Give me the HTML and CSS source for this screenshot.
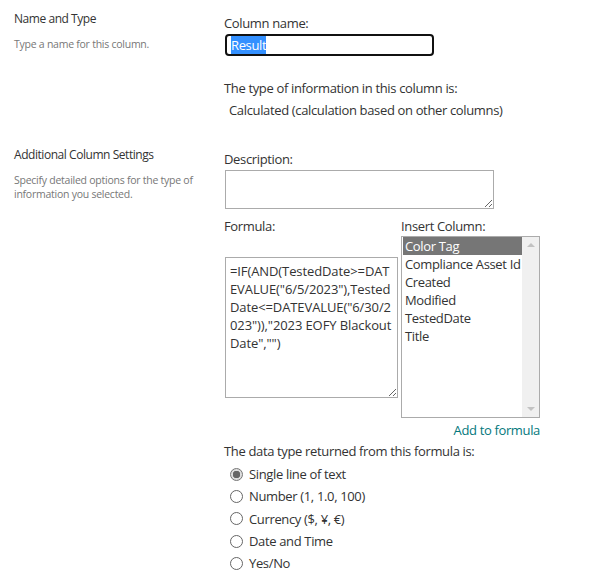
FILE: index.html
```html
<!DOCTYPE html>
<html lang="en">
<head>
    <meta charset="UTF-8">
    <title>Column Settings</title>
    <link rel="stylesheet" href="styles.css">
</head>
<body>
    <div class="section first">
        <div class="side">
            <h3>Name and Type</h3>
            <p>Type a name for this column.</p>
        </div>
        <div class="main">
            <label>Column name:</label>
            <div class="name-box"><span class="selected">Result</span></div>
            <div class="type-label">The type of information in this column is:</div>
            <div class="type-value">Calculated (calculation based on other columns)</div>
        </div>
    </div>

    <div class="section">
        <div class="side">
            <h3>Additional Column Settings</h3>
            <p>Specify detailed options for the type of information you selected.</p>
        </div>
        <div class="main">
            <label>Description:</label>
            <textarea class="desc-box"></textarea>

            <div class="formula-row">
                <div class="formula-col">
                    <label>Formula:</label>
                    <textarea class="formula-box">=IF(AND(TestedDate&gt;=DATEVALUE("6/5/2023"),TestedDate&lt;=DATEVALUE("6/30/2023")),"2023 EOFY Blackout Date","")</textarea>
                </div>
                <div class="insert-col">
                    <label>Insert Column:</label>
                    <div class="listbox">
                        <ul class="options">
                            <li class="active">Color Tag</li>
                            <li>Compliance Asset Id</li>
                            <li>Created</li>
                            <li>Modified</li>
                            <li>TestedDate</li>
                            <li>Title</li>
                        </ul>
                        <div class="scrollbar">
                            <span class="arrow up"></span>
                            <span class="arrow down"></span>
                        </div>
                    </div>
                    <a class="add-link" href="#">Add to formula</a>
                </div>
            </div>

            <div class="return-label">The data type returned from this formula is:</div>
            <div class="radios">
                <label class="radio"><input type="radio" name="rtype" checked> Single line of text</label>
                <label class="radio"><input type="radio" name="rtype"> Number (1, 1.0, 100)</label>
                <label class="radio"><input type="radio" name="rtype"> Currency ($, ¥, €)</label>
                <label class="radio"><input type="radio" name="rtype"> Date and Time</label>
                <label class="radio"><input type="radio" name="rtype"> Yes/No</label>
            </div>
        </div>
    </div>
</body>
</html>
```

FILE: styles.css
```css
body {
    margin: 0;
    padding: 0;
    background: #fff;
    color: #333;
    font-family: "Open Sans", "Noto Sans", sans-serif;
    font-size: 13px;
    letter-spacing: -0.35px;
}
.section {
    display: flex;
    padding-left: 14px;
}
.section.first {
    padding-top: 10px;
    height: 136px;
}
.side {
    width: 210px;
    flex-shrink: 0;
}
.side h3 {
    margin: 0;
    font-size: 12px;
    font-weight: normal;
    line-height: 18px;
    letter-spacing: -0.45px;
    color: #333;
}
.side p {
    margin: 9px 0 0;
    font-size: 10.5px;
    line-height: 14px;
    letter-spacing: -0.25px;
    color: #777;
    width: 190px;
}
.main {
    padding-top: 4px;
}
.main label {
    display: block;
    line-height: 18px;
}
.name-box {
    margin-top: 2px;
    margin-left: 1px;
    width: 201px;
    height: 18px;
    border: 2px solid #111;
    border-radius: 4px;
    padding-left: 4px;
    line-height: 18px;
}
.selected {
    background: #3390ff;
    color: #fff;
}
.type-label {
    margin-top: 23px;
    line-height: 18px;
}
.type-value {
    margin-top: 4px;
    margin-left: 5px;
    line-height: 18px;
}
.desc-box {
    display: block;
    margin: 2px 0 0 1px;
    width: 263px;
    height: 33px;
    border: 1px solid #ababab;
    padding: 2px;
    font-family: inherit;
    font-size: 13px;
    resize: both;
}
.formula-row {
    display: flex;
    margin-top: 8px;
}
.formula-col {
    width: 177px;
}
.formula-box {
    display: block;
    margin: 22px 0 0 1px;
    width: 163px;
    height: 131px;
    border: 1px solid #ababab;
    padding: 4px 4px;
    font-family: inherit;
    font-size: 13px;
    line-height: 18px;
    letter-spacing: -0.1px;
    color: #333;
    resize: both;
}
.insert-col {
    display: flex;
    flex-direction: column;
}
.listbox {
    display: flex;
    margin-top: 1px;
    width: 137px;
    height: 180px;
    border: 1px solid #ababab;
}
.options {
    list-style: none;
    margin: 0;
    padding: 0 0 0 1px;
    flex: 1;
}
.options li {
    line-height: 18px;
    padding-left: 2px;
    white-space: nowrap;
}
.options li.active {
    background: #767676;
    color: #fff;
}
.scrollbar {
    width: 17px;
    background: #f0f0f0;
    display: flex;
    flex-direction: column;
    justify-content: space-between;
    align-items: center;
    padding: 6px 0;
}
.arrow {
    width: 0;
    height: 0;
    border-left: 4px solid transparent;
    border-right: 4px solid transparent;
}
.arrow.up {
    border-bottom: 4px solid #c2c2c2;
}
.arrow.down {
    border-top: 4px solid #c2c2c2;
}
.add-link {
    align-self: flex-end;
    margin-top: 3px;
    color: #03787c;
    text-decoration: none;
    line-height: 18px;
}
.return-label {
    margin-top: 3px;
    line-height: 18px;
}
.radios {
    padding-left: 6px;
    padding-top: 3px;
}
.radio {
    display: flex !important;
    align-items: center;
    height: 22.3px;
}
.radio input {
    appearance: none;
    margin: 0 6px 0 0;
    width: 13px;
    height: 13px;
    border: 1px solid #666;
    border-radius: 50%;
    background: #fff;
}
.radio input:checked {
    border-color: #767676;
    background: radial-gradient(circle, #666 0 3.5px, #ddd 4px);
}
```
